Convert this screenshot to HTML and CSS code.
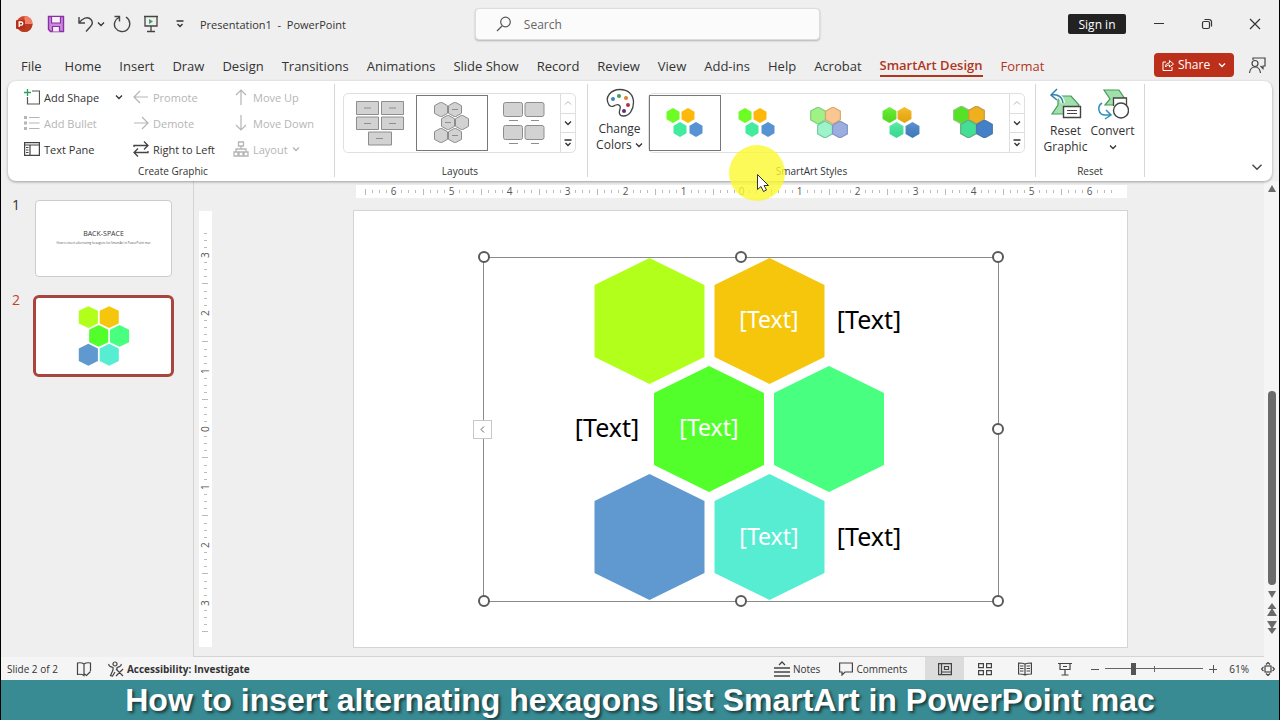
FILE: index.html
```html
<!DOCTYPE html>
<html lang="en">
<head>
    <meta charset="UTF-8">
    <meta name="viewport" content="width=device-width, initial-scale=1.0">
    <title>Presentation1 - PowerPoint</title>
    <link rel="stylesheet" href="styles.css">
</head>
<body>
    <!-- Shared icons -->
    <svg class="defs" aria-hidden="true">
        <defs>
            <symbol id="chevron" viewBox="0 0 8 8"><path d="M1 2.5 4 5.5 7 2.5" fill="none" stroke="currentColor" stroke-width="1.3"/></symbol>
            <symbol id="chevron-up" viewBox="0 0 8 8"><path d="M1 5.5 4 2.5 7 5.5" fill="none" stroke="currentColor" stroke-width="1"/></symbol>
            <symbol id="more" viewBox="0 0 8 8"><path d="M0.5 1H7.5M1.500 4 4 6.500 6.500 4" fill="none" stroke="currentColor" stroke-width="1.4"/></symbol>
            <symbol id="hex" viewBox="0 0 14 15"><path d="M7 0 13.5 3.7V11.3L7 15 0.5 11.3V3.7Z"/></symbol>
            <symbol id="slide-hexes" viewBox="594 257 291 345">
                <path fill="#b3ff1c" d="M649.5 258 704.5 285V357L649.5 384 594.5 357V285Z"/>
                <path fill="#f5c60c" d="M769.5 258 824.5 285V357L769.5 384 714.5 357V285Z"/>
                <path fill="#52ff2b" d="M709 366 764 393V465L709 492 654 465V393Z"/>
                <path fill="#48ff80" d="M829 366 884 393V465L829 492 774 465V393Z"/>
                <path fill="#5f99d0" d="M649.5 474 704.5 501V573L649.5 600 594.5 573V501Z"/>
                <path fill="#57edd3" d="M769.5 474 824.5 501V573L769.5 600 714.5 573V501Z"/>
            </symbol>
            <linearGradient id="bevel" x1="0" y1="0" x2="0" y2="1">
                <stop offset="0" stop-color="#fff" stop-opacity="0.15"/>
                <stop offset="1" stop-color="#000" stop-opacity="0.08"/>
            </linearGradient>
        </defs>
    </svg>

    <header class="titlebar">
        <div class="quick-access">
            <svg class="logo" width="18" height="18" viewBox="0 0 18 18">
                <circle cx="9.5" cy="9" r="8" fill="#d0492d"/>
                <path d="M9.5 1a8 8 0 0 1 8 8h-8z" fill="#f0806a"/>
                <path d="M1.5 9a8 8 0 0 0 16 0z" fill="#b83a20"/>
                <rect x="1" y="5" width="9" height="9" rx="1" fill="#b5301a"/>
                <path d="M4.2 12V7h2a1.6 1.6 0 0 1 0 3.2h-2" fill="none" stroke="#fff" stroke-width="1.3"/>
            </svg>
            <button class="icon-btn save" aria-label="Save">
                <svg width="18" height="18" viewBox="0 0 18 18"><path d="M1.5 1.5h15v15h-13l-2-2z" fill="#c78bd8" stroke="#8b2fa8" stroke-width="1.4"/><path d="M4.5 2v6h9V2M5.500 16.500v-5h7v5" fill="#f6eef8" stroke="#8b2fa8" stroke-width="1.2"/></svg>
            </button>
            <button class="icon-btn undo" aria-label="Undo">
                <svg width="18" height="18" viewBox="0 0 18 18"><path d="M2 2v6h6M2 8C5 3 11 1 14 4.500c2 2.500 1.500 5-.5 7L9 16.500" fill="none" stroke="#444" stroke-width="1.4"/></svg>
                <svg width="8" height="8"><use href="#chevron"/></svg>
            </button>
            <button class="icon-btn redo" aria-label="Repeat">
                <svg width="18" height="18" viewBox="0 0 18 18"><path d="M1.500 1.500h5v5M6.500 2C2 4.500 0 9 2.500 13s8.500 5 12 1.500S17.500 5 13 2" fill="none" stroke="#444" stroke-width="1.4"/></svg>
            </button>
            <button class="icon-btn present" aria-label="Start From Beginning">
                <svg width="16" height="18" viewBox="0 0 16 18"><path d="M1 1.500h14M2 2v9h12V2M8 11v5.500M4 16.500h8" fill="none" stroke="#444" stroke-width="1.3"/><path d="M6 4v5l4-2.500z" fill="#3fa05e"/></svg>
            </button>
            <button class="icon-btn customize" aria-label="Customize Quick Access Toolbar">
                <svg width="8" height="8"><use href="#more"/></svg>
            </button>
            <span class="doc-name">Presentation1&nbsp; -&nbsp; PowerPoint</span>
        </div>
        <label class="search">
            <svg width="16" height="16" viewBox="0 0 16 16"><path d="M6 10 1 15" stroke="#555" stroke-width="1.200"/><circle cx="9.500" cy="6" r="4.800" fill="none" stroke="#555" stroke-width="1.200"/></svg>
            <input type="search" placeholder="Search" aria-label="Search">
        </label>
        <div class="window-controls">
            <button class="sign-in">Sign in</button>
            <button class="win-btn" aria-label="Minimize"><svg width="12" height="12" viewBox="0 0 12 12"><path d="M1 5.500h10" stroke="#333"/></svg></button>
            <button class="win-btn" aria-label="Restore"><svg width="12" height="12" viewBox="0 0 12 12" fill="none" stroke="#333" stroke-width="1.200"><rect x="1.500" y="3.500" width="7" height="7" rx="1.500"/><path d="M3.500 1.500H8A2.500 2.500 0 0 1 10.500 4v4.500"/></svg></button>
            <button class="win-btn" aria-label="Close"><svg width="12" height="12" viewBox="0 0 12 12"><path d="M1 1l10 10M11 1 1 11" stroke="#333" stroke-width="1.200"/></svg></button>
        </div>
    </header>

    <nav class="tabs">
        <button class="tab file">File</button>
        <button class="tab">Home</button>
        <button class="tab">Insert</button>
        <button class="tab">Draw</button>
        <button class="tab">Design</button>
        <button class="tab">Transitions</button>
        <button class="tab">Animations</button>
        <button class="tab">Slide Show</button>
        <button class="tab">Record</button>
        <button class="tab">Review</button>
        <button class="tab">View</button>
        <button class="tab">Add-ins</button>
        <button class="tab">Help</button>
        <button class="tab">Acrobat</button>
        <button class="tab context active">SmartArt Design</button>
        <button class="tab context">Format</button>
        <button class="share">
            <svg width="12" height="12" viewBox="0 0 12 12" fill="none" stroke="#fff"><path d="M4 3H1v8.500h9V8M3.500 8C3.500 5 5 4 7.500 4V1.500L11.500 5 7.500 8V6C5.500 6 4.500 6.500 3.500 8z"/></svg>
            <span>Share</span>
            <svg width="8" height="8"><use href="#chevron"/></svg>
        </button>
        <button class="icon-btn" aria-label="Account">
            <svg width="18" height="18" viewBox="0 0 18 18" fill="none" stroke="#444" stroke-width="1.200"><path d="M5 4V2h12v8h-2v2.500L12.500 10"/><circle cx="7" cy="7.500" r="3"/><path d="M1.500 17c.5-4 2.500-6 5.500-6s5 2 5.500 6"/></svg>
        </button>
    </nav>

    <section class="ribbon">
        <div class="group create-graphic">
            <div class="commands">
                <button class="command"><svg width="16" height="16" viewBox="0 0 16 16"><path d="M8 2h7.500v13h-12V8" fill="none" stroke="#555" stroke-width="1.200"/><path d="M3.500 0v7M0 3.500h7" stroke="#2f9e5b" stroke-width="1.300"/></svg><span>Add Shape</span><svg class="push" width="8" height="8"><use href="#chevron"/></svg></button>
                <button class="command" disabled><svg width="16" height="16" viewBox="0 0 16 16"><path d="M15 8H1M7 2 1 8l6 6" fill="none" stroke="currentColor" stroke-width="1.200"/></svg><span>Promote</span></button>
                <button class="command" disabled><svg width="16" height="16" viewBox="0 0 16 16"><path d="M8 16V1M3 6l5-5 5 5" fill="none" stroke="currentColor" stroke-width="1.200"/></svg><span>Move Up</span></button>
                <button class="command" disabled><svg width="16" height="16" viewBox="0 0 16 16"><path d="M5 2.500h10.500M5 8h10.500M5 13.500h10.500" stroke="currentColor" stroke-width="1.200"/><path d="M0 2.500h3M0 8h3M0 13.500h3" stroke="currentColor" stroke-width="3"/></svg><span>Add Bullet</span></button>
                <button class="command" disabled><svg width="16" height="16" viewBox="0 0 16 16"><path d="M1 8h14M9 2l6 6-6 6" fill="none" stroke="currentColor" stroke-width="1.200"/></svg><span>Demote</span></button>
                <button class="command" disabled><svg width="16" height="16" viewBox="0 0 16 16"><path d="M8 0v15M3 10l5 5 5-5" fill="none" stroke="currentColor" stroke-width="1.200"/></svg><span>Move Down</span></button>
                <button class="command"><svg width="16" height="16" viewBox="0 0 16 16" fill="none" stroke="#444" stroke-width="1.200"><path d="M.6 1.600h14.800v12.800H.6zM.6 4h14.800M6 4v10.500M2 6.500h2.500M2 9h2.500M2 11.500h2.500"/></svg><span>Text Pane</span></button>
                <button class="command"><svg width="16" height="16" viewBox="0 0 16 16" fill="none" stroke="#444" stroke-width="1.300"><path d="M1 6V4.500h14M11 .5l4 4-4 4M15 10v1.500H1M5 7.500l-4 4 4 4"/></svg><span>Right to Left</span></button>
                <button class="command" disabled><svg width="16" height="16" viewBox="0 0 16 16" fill="none" stroke="currentColor" stroke-width="1.300"><path d="M5.500 1h5v4h-5zM8 5v3M3 11V8h10v3M1 11h4v4H1zM6 11h4v4H6zM11 11h4v4h-4z"/></svg><span>Layout</span><svg width="8" height="8"><use href="#chevron"/></svg></button>
            </div>
            <div class="group-label">Create Graphic</div>
        </div>

        <div class="group layouts">
            <div class="gallery">
                <button class="item" aria-label="Default layout">
                    <svg width="48" height="46" viewBox="0 0 48 46" fill="#d2d2d2" stroke="#8d8d8d"><path d="M.5 1.500h22v13h-22zM25.500 1.500h22v13h-22zM.5 17h22v12.500h-22zM25.500 17h22v12.500h-22zM12.500 32h23v13h-23z"/><path d="M8 8h7M33 8h7M8 23.500h7M33 23.500h7M20 38.500h7"/></svg>
                </button>
                <button class="item selected" aria-label="Alternating hexagons">
                    <svg width="36" height="42" viewBox="0 0 36 42" fill="#d2d2d2" stroke="#8d8d8d"><use href="#hex" x="0" width="14" height="15"/><use href="#hex" x="14" width="14" height="15"/><use href="#hex" x="7" y="13" width="14" height="15"/><use href="#hex" x="21" y="13" width="14" height="15"/><use href="#hex" y="26" width="14" height="15"/><use href="#hex" x="14" y="26" width="14" height="15"/><path d="M18 7.500h6M11 20.500h6M18 33.500h6"/></svg>
                </button>
                <button class="item" aria-label="Picture caption list">
                    <svg width="42" height="44" viewBox="0 0 42 44" fill="#d2d2d2" stroke="#8d8d8d"><rect x=".5" y="1.500" width="19" height="14" rx="2"/><rect x="22" y="1.500" width="19" height="14" rx="2"/><rect x=".5" y="24.500" width="19" height="14" rx="2"/><rect x="22" y="24.500" width="19" height="14" rx="2"/><path d="M6 19.500h9M28 19.500h8M6 42.500h9M28 42.500h8"/></svg>
                </button>
                <div class="spin">
                    <button aria-label="Previous row" disabled><svg width="8" height="8"><use href="#chevron-up"/></svg></button>
                    <button aria-label="Next row"><svg width="8" height="8"><use href="#chevron"/></svg></button>
                    <button aria-label="More layouts"><svg width="8" height="8"><use href="#more"/></svg></button>
                </div>
            </div>
            <div class="group-label">Layouts</div>
        </div>

        <div class="group styles">
            <div class="styles-row">
                <button class="big">
                    <svg width="30" height="30" viewBox="0 0 30 30"><path d="M4 17C-1 9 6 1.500 15 1.500c8 0 13.500 5 13.500 13 0 7-4 13.500-10 13.500-5 0-4.500-4-3.500-7s-1-5-4-4-4 3-7 0z" fill="#fff" stroke="#444" stroke-width="1.300"/><circle cx="8" cy="11" r="2" fill="#3b83bd"/><circle cx="14" cy="8" r="2" fill="#3f9e55"/><circle cx="21" cy="10" r="2" fill="#d98032"/><circle cx="23" cy="17" r="2" fill="#b03050"/><circle cx="19" cy="23" r="2" fill="#5c2d78"/></svg>
                    <span>Change<br>Colors <svg width="8" height="8"><use href="#chevron"/></svg></span>
                </button>
                <div class="gallery">
                    <button class="item selected" aria-label="Simple Fill">
                        <svg width="38" height="30" viewBox="0 0 38 30"><use href="#hex" width="14" height="15" fill="#6dfc24"/><use href="#hex" x="15" width="14" height="15" fill="#fdb90b"/><use href="#hex" x="7" y="14" width="14" height="15" fill="#42ec9c"/><use href="#hex" x="23" y="14" width="14" height="15" fill="#5792d2"/></svg>
                    </button>
                    <button class="item" aria-label="White Outline">
                        <svg width="38" height="30" viewBox="0 0 38 30"><use href="#hex" width="14" height="15" fill="#6dfc24"/><use href="#hex" x="15" width="14" height="15" fill="#fdb90b"/><use href="#hex" x="7" y="14" width="14" height="15" fill="#42ec9c"/><use href="#hex" x="23" y="14" width="14" height="15" fill="#5792d2"/></svg>
                    </button>
                    <button class="item" aria-label="Subtle Effect">
                        <svg width="40" height="34" viewBox="0 0 40 34"><use href="#hex" x="1" y="1" width="16" height="17" fill="#a0f287" stroke="#7fd07a"/><use href="#hex" x="16" y="1" width="16" height="17" fill="#f9c791" stroke="#dba86a"/><use href="#hex" x="8" y="15" width="16" height="17" fill="#9ef3ca" stroke="#70cba0"/><use href="#hex" x="23" y="15" width="16" height="17" fill="#9baede" stroke="#8094c6"/></svg>
                    </button>
                    <button class="item" aria-label="Moderate Effect">
                        <svg width="38" height="32" viewBox="0 0 38 32"><use href="#hex" width="15" height="16" fill="#58ee20"/><use href="#hex" x="15" width="15" height="16" fill="#f7b40e"/><use href="#hex" x="7" y="15" width="15" height="16" fill="#3feb9c"/><use href="#hex" x="23" y="15" width="15" height="16" fill="#4583cc"/><g fill="url(#bevel)"><use href="#hex" width="15" height="16"/><use href="#hex" x="15" width="15" height="16"/><use href="#hex" x="7" y="15" width="15" height="16"/><use href="#hex" x="23" y="15" width="15" height="16"/></g></svg>
                    </button>
                    <button class="item" aria-label="Intense Effect">
                        <svg width="40" height="34" viewBox="0 0 40 34"><use href="#hex" width="17" height="18" fill="#54e128" stroke="#8cc97b"/><use href="#hex" x="15" width="17" height="18" fill="#eeb01c" stroke="#c69b47"/><use href="#hex" x="7" y="14" width="17" height="18" fill="#43df95" stroke="#61aa84"/><use href="#hex" x="23" y="14" width="17" height="18" fill="#4380c7" stroke="#4978ad"/></svg>
                    </button>
                    <div class="spin">
                        <button aria-label="Previous row" disabled><svg width="8" height="8"><use href="#chevron-up"/></svg></button>
                        <button aria-label="Next row"><svg width="8" height="8"><use href="#chevron"/></svg></button>
                        <button aria-label="More styles"><svg width="8" height="8"><use href="#more"/></svg></button>
                    </div>
                </div>
            </div>
            <div class="group-label">SmartArt Styles</div>
        </div>

        <div class="group reset">
            <div class="reset-row">
                <button class="big">
                    <svg width="32" height="32" viewBox="0 0 32 32" fill="none" stroke-width="1.200"><path d="M8 8h13l8 9-8 9H2l6-9z" fill="#9fe0ab" stroke="#4b9a5b"/><path d="M7 1 1 7l6 5M1 7c6-1 11 1 12 8" stroke="#fff" stroke-width="4"/><path d="M7 1 1 7l6 5M1 7c6-1 11 1 12 8" stroke="#2f82ad" stroke-width="1.500"/><path d="M13.500 18.500h17v11h-17z" fill="#fff" stroke="#444" stroke-width="1.400"/><path d="M17 22.500h10M17 25.500h10" stroke="#444"/></svg>
                    <span>Reset<br>Graphic</span>
                </button>
                <button class="big">
                    <svg width="32" height="32" viewBox="0 0 32 32" fill="none" stroke-width="1.200"><path d="M7 2h15l6 9-4 6H8l5-6z" fill="#9fe0ab" stroke="#4b9a5b"/><path d="M16.500 18v-8h13v9" fill="#fff" stroke="#444" stroke-width="1.300"/><circle cx="24" cy="22.500" r="7.500" fill="#fff" stroke="#444" stroke-width="1.400"/><path d="M5 15c-5 3-4 12 3 12h6M9 22l5 5-6 4" stroke="#2f92bd" stroke-width="1.500"/></svg>
                    <span>Convert<br><svg width="8" height="8"><use href="#chevron"/></svg></span>
                </button>
            </div>
            <div class="group-label">Reset</div>
        </div>
        <button class="collapse" aria-label="Collapse the Ribbon"><svg width="12" height="12" viewBox="0 0 8 8"><path d="M1 2.500 4 5.500 7 2.500" fill="none" stroke="#444" stroke-width=".9"/></svg></button>
    </section>

    <main class="workspace">
        <aside class="thumbnails">
            <div class="thumb-row">
                <span class="number">1</span>
                <div class="thumb title-slide">
                    <span class="thumb-title">BACK-SPACE</span>
                    <span class="thumb-sub">How to insert alternating hexagons list SmartArt in PowerPoint mac</span>
                </div>
            </div>
            <div class="thumb-row current">
                <span class="number">2</span>
                <div class="thumb"><svg width="52" height="60"><use href="#slide-hexes"/></svg></div>
            </div>
        </aside>

        <div class="stage">
            <div class="ruler horizontal">
                <span>6</span><span>5</span><span>4</span><span>3</span><span>2</span><span>1</span><span>0</span><span>1</span><span>2</span><span>3</span><span>4</span><span>5</span><span>6</span>
            </div>
            <div class="ruler vertical">
                <span>3</span><span>2</span><span>1</span><span>0</span><span>1</span><span>2</span><span>3</span>
            </div>
            <div class="slide">
                <svg viewBox="354 211 773 436">
                    <use href="#slide-hexes" x="594" y="257" width="291" height="345"/>
                    <g class="node-text" text-anchor="middle">
                        <text x="769" y="328">[Text]</text>
                        <text x="709" y="436">[Text]</text>
                        <text x="769" y="545">[Text]</text>
                    </g>
                    <g class="side-text" text-anchor="middle">
                        <text x="869" y="329">[Text]</text>
                        <text x="607" y="437">[Text]</text>
                        <text x="869" y="546">[Text]</text>
                    </g>
                    <!-- Selection frame -->
                    <path d="M483.500 257.500H998.500V601.500H483.500Z" fill="none" stroke="#8a8a8a"/>
                    <g fill="#fff" stroke="#5a5a5a" stroke-width="2">
                        <circle cx="484" cy="257" r="5"/><circle cx="741" cy="257" r="5"/><circle cx="998" cy="257" r="5"/>
                        <circle cx="998" cy="429" r="5"/>
                        <circle cx="484" cy="601" r="5"/><circle cx="741" cy="601" r="5"/><circle cx="998" cy="601" r="5"/>
                    </g>
                    <rect x="473.500" y="420.500" width="18" height="18" fill="#fff" stroke="#c8c8c8"/>
                    <path d="M484 426.500 481 429.500 484 432.500" fill="none" stroke="#666"/>
                </svg>
            </div>
        </div>

        <div class="scrollbar">
            <svg width="8" height="8" viewBox="0 0 8 8"><path d="M4 0 8 7H0z"/></svg>
            <div class="scroll-thumb"></div>
            <svg width="8" height="8" viewBox="0 0 8 8"><path d="M0 1h8L4 8z"/></svg>
            <svg width="10" height="13" viewBox="0 0 10 13"><path d="M5 0l4.500 6H0.500zM5 5l5 8H0z"/></svg>
            <svg width="10" height="13" viewBox="0 0 10 13"><path d="M0 0h10L5 8zM0.500 7h9L5 13z"/></svg>
        </div>
    </main>

    <footer class="statusbar">
        <span class="slide-count">Slide 2 of 2</span>
        <button class="icon-btn" aria-label="Spelling"><svg width="16" height="16" viewBox="0 0 16 16" fill="none" stroke="#444" stroke-width="1.200"><path d="M8 3C6 1.500 4 1.500 1.500 2v11.500c2.500-.5 4.500-.5 6.500 1V3c2-1.500 4-1.500 6.500-1v8M8.500 13l2 1.500 4-4"/></svg></button>
        <button class="status-btn access">
            <svg width="16" height="16" viewBox="0 0 16 16" fill="none" stroke="#444" stroke-width="1.200"><circle cx="7" cy="3" r="2"/><path d="M1 3c-1 2 2 3 4 3.500V9l-2.500 5.500 2 .5L7 11M13 3c1 2-2 3-4 3.500V9M8 8l7 7M15 8l-7 7"/></svg>
            <strong>Accessibility: Investigate</strong>
        </button>
        <button class="status-btn notes">
            <svg width="16" height="16" viewBox="0 0 16 16" fill="none" stroke="#444" stroke-width="1.300"><path d="M0 7h16M0 11h16M0 15h16M5 4l3-3 3 3"/></svg>
            <span>Notes</span>
        </button>
        <button class="status-btn comments">
            <svg width="14" height="14" viewBox="0 0 14 14" fill="none" stroke="#444" stroke-width="1.200"><path d="M.6 1h12.800v9H6l-3 3v-3H.6z"/></svg>
            <span>Comments</span>
        </button>
        <div class="views">
            <button class="view active" aria-label="Normal"><svg width="14" height="14" viewBox="0 0 14 14" fill="none" stroke="#444" stroke-width="1.200"><path d="M.6 1.600h12.800v11H.6zM3.500 1.600v11M3.500 10h10M6.500 4.500h4v3h-4z"/></svg></button>
            <button class="view" aria-label="Slide Sorter"><svg width="14" height="14" viewBox="0 0 14 14" fill="none" stroke="#444" stroke-width="1.200"><path d="M.6 1.600h4.800v4H.6zM8.600 1.600h4.800v4H8.600zM.6 8.600h4.800v4H.6zM8.600 8.600h4.800v4H8.600z"/></svg></button>
            <button class="view" aria-label="Reading View"><svg width="14" height="14" viewBox="0 0 14 14" fill="none" stroke="#444" stroke-width="1.200"><path d="M7 2C5 1 3 1 .6 1v11c2.400 0 4.400 0 6.400 1 2-1 4-1 6.400-1V1C11 1 9 1 7 2zM7 2v11M2 4h3.500M2 6.500h3.500M2 9h3.500M8.500 4H12M8.500 6.500H12M8.500 9H12"/></svg></button>
            <button class="view" aria-label="Slide Show"><svg width="14" height="14" viewBox="0 0 14 14" fill="none" stroke="#444" stroke-width="1.200"><path d="M0 1.500h14M2 1.500v6h10v-6M7 7.500v5.500M3.500 13h7M5 4.500h4"/></svg></button>
        </div>
        <button class="zoom-btn" aria-label="Zoom out"><svg width="8" height="8" viewBox="0 0 8 8"><path d="M0 4.500h8" stroke="#555"/></svg></button>
        <input class="zoom" type="range" min="0" max="100" value="28" aria-label="Zoom">
        <button class="zoom-btn" aria-label="Zoom in"><svg width="8" height="8" viewBox="0 0 8 8"><path d="M0 4.500h8M4.500 0v8" stroke="#555"/></svg></button>
        <span class="percent">61%</span>
        <button class="icon-btn" aria-label="Fit slide to window"><svg width="14" height="14" viewBox="0 0 14 14" fill="none" stroke="#444" stroke-width="1.200"><rect x="4" y="4" width="6" height="6"/><path d="M5 2.500l2-2 2 2M5 11.500l2 2 2-2M2.500 5l-2 2 2 2M11.500 5l2 2-2 2"/></svg></button>
    </footer>

    <div class="banner">How to insert alternating hexagons list SmartArt in PowerPoint mac</div>

    <!-- Highlighted mouse pointer -->
    <div class="pointer">
        <svg width="58" height="58" viewBox="0 0 58 58"><circle cx="29" cy="29" r="28" fill="#fbf92f" fill-opacity=".8"/><path d="M29.500 30.500v15l3.500-3 2.500 5 3-1.500-2.500-4.500h4.500z" fill="#fff" stroke="#333"/></svg>
    </div>
</body>
</html>
```
FILE: styles.css
```css
* {
    box-sizing: border-box;
}
body {
    margin: 0;
    min-height: 100vh;
    display: flex;
    flex-direction: column;
    position: relative;
    background-color: #efefef;
    border-left: 1px solid #000;
    border-right: 1px solid #000;
    font-family: "Open Sans", "Noto Sans", sans-serif;
    font-size: 12px;
    color: #333;
}
button {
    font: inherit;
    color: inherit;
    background: none;
    border: none;
    padding: 0;
    display: flex;
    align-items: center;
    justify-content: center;
}
svg {
    flex: none;
}
.defs {
    position: absolute;
    width: 0;
    height: 0;
}

/* Title bar */
.titlebar {
    display: grid;
    grid-template-columns: 37% 27% 1fr;
    column-gap: 1px;
    align-items: center;
    height: 48px;
}
.quick-access {
    display: flex;
    align-items: center;
    padding-left: 14px;
}
.save {
    margin-left: 14px;
}
.undo {
    margin-left: 12px;
    gap: 2px;
}
.redo {
    margin-left: 8px;
}
.present {
    margin-left: 12px;
}
.customize {
    margin-left: 17px;
}
.doc-name {
    margin-left: 16px;
    font-size: 11px;
}
.search {
    display: flex;
    align-items: center;
    gap: 12px;
    height: 32px;
    padding: 0 20px;
    background-color: #fbfbfb;
    border: 1px solid #ddd;
    border-radius: 4px;
    box-shadow: 0 1px 2px rgba(0, 0, 0, 0.25);
}
.search input {
    flex: 1;
    min-width: 0;
    padding: 0;
    border: none;
    outline: none;
    background: none;
    font: inherit;
}
.search input::placeholder {
    color: #666;
    opacity: 1;
}
.window-controls {
    display: flex;
    align-items: center;
    justify-content: flex-end;
}
.sign-in {
    width: 58px;
    height: 20px;
    margin-right: 9px;
    background-color: #222;
    border-radius: 2px;
    color: #fff;
}
.win-btn {
    width: 48px;
    height: 32px;
}

/* Tabs */
.tabs {
    display: flex;
    align-items: center;
    gap: 18px;
    height: 33px;
    padding: 0 13px 0 20px;
    font-size: 13px;
}
.tab {
    height: 24px;
    white-space: nowrap;
    border-top: 2px solid transparent;
}
.tab.file {
    margin-right: 5px;
}
.tab.context {
    color: #b0361e;
}
.tab.active {
    font-weight: 600;
    border-bottom: 2px solid #b0361e;
}
.share {
    width: 80px;
    height: 24px;
    margin-left: auto;
    margin-right: -4px;
    gap: 4px;
    background-color: #bc2f1a;
    border-radius: 4px;
    color: #fff;
    font-size: 12px;
}
.share span {
    margin-right: 4px;
}

/* Ribbon */
.ribbon {
    display: flex;
    height: 100px;
    margin: 0 7px;
    background-color: #fff;
    border-radius: 8px;
    box-shadow: 0 1px 3px rgba(0, 0, 0, 0.35);
    z-index: 1;
}
.group {
    display: flex;
    flex-direction: column;
    justify-content: space-between;
    margin: 3px 0 4px;
    border-right: 1px solid #d6d6d6;
}
.group-label {
    text-align: center;
    font-size: 10px;
    line-height: 14px;
    margin-bottom: -1px;
}
.create-graphic {
    width: 327px;
    padding-left: 16px;
}
.create-graphic .group-label {
    margin-right: 12px;
}
.commands {
    display: grid;
    grid-template-columns: 109px 100px 1fr;
    grid-auto-rows: 26px;
}
.command {
    justify-content: flex-start;
    gap: 4px;
    font-size: 11px;
    white-space: nowrap;
}
.command .push {
    margin-left: auto;
    margin-right: 10px;
}
.command:disabled,
.spin button:disabled {
    color: #b5b5b5;
}
.layouts {
    width: 253px;
    padding: 0 10px 0 8px;
}
.gallery {
    display: flex;
    margin-top: 9px;
    border: 1px solid #e0e0e0;
    border-radius: 5px;
    height: 60px;
}
.layouts .gallery {
    width: 233px;
}
.item {
    width: 72px;
    margin: 1px 0;
}
.item.selected {
    border: 1px solid #777;
}
.spin {
    flex: 1;
    display: flex;
    flex-direction: column;
    border-left: 1px solid #ddd;
}
.spin button {
    flex: 1;
    width: 100%;
}
.spin button + button {
    border-top: 1px solid #ddd;
}
.styles {
    width: 448px;
}
.styles-row {
    display: grid;
    grid-template-columns: 57px 377px;
    padding-left: 3px;
}
.big {
    flex-direction: column;
    justify-content: flex-start;
    padding-top: 4px;
    line-height: 16px;
    font-size: 12px;
    gap: 3px;
}
.reset {
    width: 109px;
}
.reset-row {
    display: grid;
    grid-template-columns: 1fr 1fr;
    padding: 0 8px 0 6px;
}
.collapse {
    align-self: flex-end;
    margin: 0 9px 8px auto;
}

/* Workspace */
.workspace {
    flex: 1;
    display: flex;
}
.thumbnails {
    width: 193px;
    padding: 19px 18px 0 11px;
    border-right: 1px solid #d4d4d4;
}
.thumb-row {
    display: flex;
    align-items: flex-start;
    margin-bottom: 18px;
}
.number {
    width: 23px;
    font-size: 14px;
    line-height: 10px;
}
.thumb {
    display: flex;
    flex-direction: column;
    align-items: center;
    justify-content: center;
    width: 137px;
    height: 77px;
    background-color: #fff;
    border: 1px solid #ccc;
    border-radius: 4px;
}
.title-slide {
    padding-bottom: 4px;
}
.thumb-title {
    font-size: 7px;
    line-height: 12px;
}
.thumb-sub {
    font-size: 3px;
    line-height: 6px;
    color: #555;
}
.current .number {
    width: 21px;
    color: #c0432b;
}
.current .thumb {
    width: 141px;
    height: 82px;
    border: 3px solid #a8453c;
    border-radius: 6px;
}
.stage {
    flex: 1;
    display: grid;
    grid-template-columns: 13px 1fr;
    grid-template-rows: 13px auto;
    gap: 13px 142px;
    align-content: start;
    padding: 4px 137px 9px 5px;
    border-bottom: 1px solid #d4d4d4;
}
.ruler {
    display: flex;
    justify-content: center;
    overflow: hidden;
    background-color: #fff;
    font-size: 10px;
    color: #555;
}
.ruler span {
    flex: 0 0 58px;
    text-align: center;
    line-height: 13px;
    --dot: linear-gradient(#bbb, #bbb);
    background-image: var(--dot), var(--dot), var(--dot), var(--dot), var(--dot), var(--dot), var(--dot);
    background-repeat: no-repeat;
    background-size: 1px 6px, 1px 3px, 1px 3px, 1px 3px, 1px 3px, 1px 3px, 1px 3px;
    background-position: 0 4px, 7px 5px, 14px 5px, 21px 5px, 36px 5px, 43px 5px, 50px 5px;
}
.horizontal {
    grid-column: 2;
    margin-left: 2px;
}
.vertical {
    grid-column: 1;
    writing-mode: vertical-rl;
    transform: rotate(180deg);
}
.vertical span {
    background-size: 6px 1px, 3px 1px, 3px 1px, 3px 1px, 3px 1px, 3px 1px, 3px 1px;
    background-position: 4px 0, 5px 7px, 5px 14px, 5px 21px, 5px 36px, 5px 43px, 5px 50px;
}
.slide {
    background-color: #fff;
    outline: 1px solid #d4d4d4;
}
.slide svg {
    display: block;
    width: 100%;
}
.node-text {
    font-family: "Noto Sans", sans-serif;
    font-size: 23px;
    fill: #fff;
}
.side-text {
    font-family: "Noto Sans", sans-serif;
    font-size: 25px;
    fill: #000;
}
.scrollbar {
    display: flex;
    flex-direction: column;
    align-items: center;
    gap: 5px;
    width: 15px;
    padding: 4px 0 23px;
    background-color: #f5f5f5;
    fill: #6b6b6b;
}
.scroll-thumb {
    width: 8px;
    height: 194px;
    margin-top: auto;
    background-color: #6b6b6b;
    border-radius: 4px;
}

/* Status bar */
.statusbar {
    display: flex;
    align-items: center;
    height: 23px;
    padding: 0 4px 0 6px;
    background-color: #f5f5f5;
    font-size: 10px;
}
.slide-count {
    margin-right: 18px;
}
.status-btn {
    gap: 3px;
}
.access {
    margin-left: 16px;
}
.notes {
    margin-left: auto;
    margin-right: 19px;
}
.comments {
    margin-right: 18px;
}
.views {
    display: flex;
    gap: 1px;
    align-self: stretch;
    margin-right: 7px;
}
.view {
    width: 39px;
}
.view.active {
    background-color: #dcdcdc;
}
.zoom {
    appearance: none;
    width: 98px;
    height: 12px;
    margin: 0 6px;
    background: linear-gradient(#666, #666) 49px 50% / 1px 6px no-repeat, linear-gradient(#666, #666) 0 50% / 100% 1px no-repeat;
}
.zoom::-webkit-slider-thumb {
    appearance: none;
    width: 5px;
    height: 12px;
    background-color: #555;
}
.percent {
    margin: 0 12px;
}

.banner {
    height: 40px;
    line-height: 40px;
    background-color: #388b93;
    color: #fff;
    font-family: "Liberation Sans", Arial, sans-serif;
    font-size: 32px;
    font-weight: bold;
    text-align: center;
    white-space: nowrap;
    text-shadow: 2px 2px 3px rgba(0, 0, 0, 0.6);
}
.pointer {
    position: absolute;
    left: 727px;
    top: 144px;
    z-index: 2;
    pointer-events: none;
}
```
